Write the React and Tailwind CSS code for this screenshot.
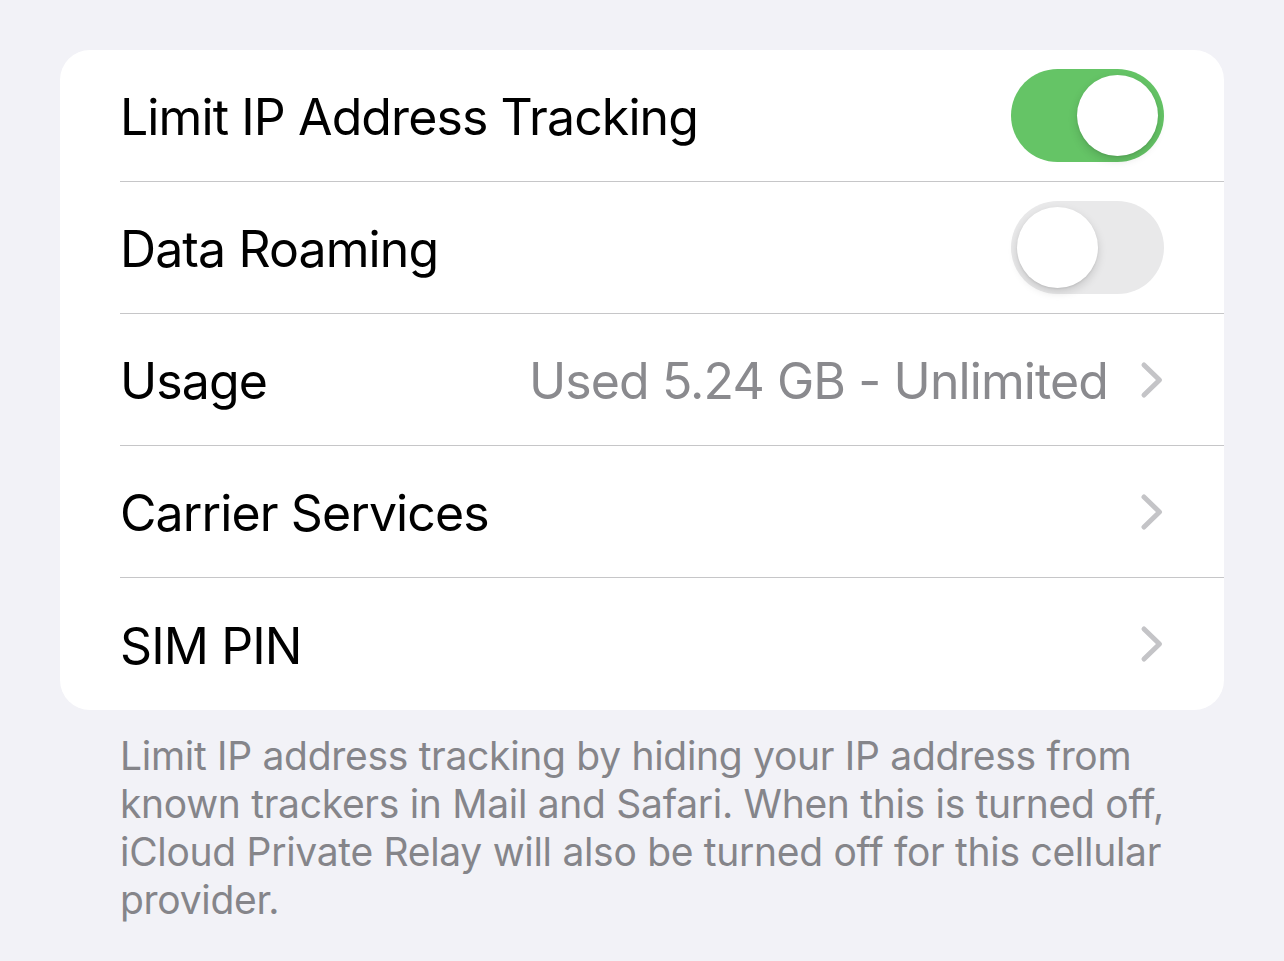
import React from "react";

const font = { fontFamily: "Inter, 'Noto Sans', sans-serif" };

function Toggle({ on }) {
  return (
    <div
      className={
        "relative w-[153px] h-[93px] rounded-full " +
        (on ? "bg-[#65c466]" : "bg-[#e9e9ea]")
      }
    >
      <div
        className={
          "absolute top-[6px] w-[81px] h-[81px] rounded-full bg-white shadow-[0_4px_10px_rgba(0,0,0,0.15),0_1px_2px_rgba(0,0,0,0.08)] " +
          (on ? "right-[6px]" : "left-[6px]")
        }
      />
    </div>
  );
}

function Chevron() {
  return (
    <svg width="24" height="38" viewBox="0 0 24 38" fill="none">
      <path
        d="M4 4 L19.5 19 L4 34"
        stroke="#c4c4c7"
        strokeWidth="5"
        strokeLinecap="round"
        strokeLinejoin="round"
      />
    </svg>
  );
}

function Row({ label, right, last }) {
  return (
    <div
      className={
        "flex items-center justify-between h-[132px] pr-[60px] " +
        (last ? "" : "border-b border-[#c6c6c8]")
      }
    >
      <span className="pt-[4px] text-[50px] text-black tracking-[-0.9px]">{label}</span>
      {right}
    </div>
  );
}

export default function App() {
  return (
    <div className="min-h-[961px] bg-[#f2f2f7] pt-[50px] px-[60px]" style={font}>
      <div className="bg-white rounded-[30px] pl-[60px] overflow-hidden">
        <Row label="Limit IP Address Tracking" right={<Toggle on />} />
        <Row label="Data Roaming" right={<Toggle on={false} />} />
        <Row
          label="Usage"
          right={
            <div className="flex items-center gap-[32px]">
              <span className="pt-[4px] text-[50px] text-[#8a8a8e] tracking-[-0.9px]">
                Used 5.24 GB - Unlimited
              </span>
              <Chevron />
            </div>
          }
        />
        <Row label="Carrier Services" right={<Chevron />} />
        <Row label="SIM PIN" right={<Chevron />} last />
      </div>
      <p className="mt-[22px] pl-[60px] text-[39px] leading-[48px] text-[#85858a] tracking-[-0.3px] whitespace-nowrap">
        Limit IP address tracking by hiding your IP address from
        <br />
        known trackers in Mail and Safari. When this is turned off,
        <br />
        iCloud Private Relay will also be turned off for this cellular
        <br />
        provider.
      </p>
    </div>
  );
}
